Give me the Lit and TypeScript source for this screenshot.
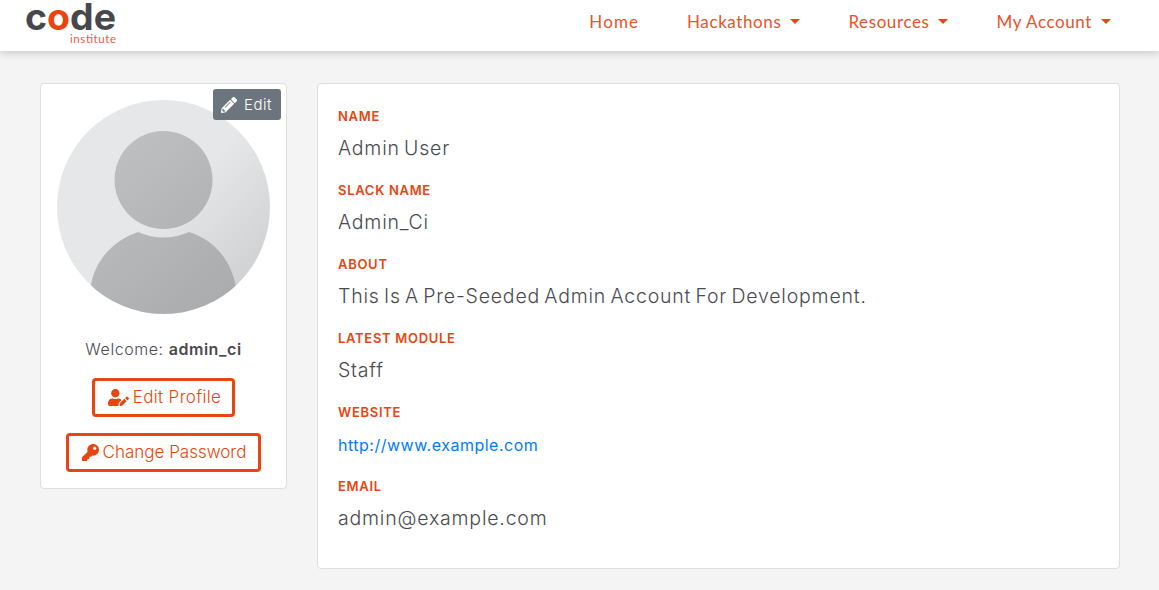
import { css, html, LitElement, svg } from 'lit';
import { customElement } from 'lit/decorators.js';

const PENCIL =
  'M497.9 142.1l-46.1 46.1c-4.7 4.7-12.3 4.7-17 0l-111-111c-4.7-4.7-4.7-12.3 0-17l46.1-46.1c18.7-18.7 49.1-18.7 67.9 0l60.1 60.1c18.8 18.7 18.8 49.1 0 67.9zM284.2 99.8L21.6 362.4.4 483.9c-2.9 16.4 11.4 30.6 27.8 27.8l121.5-21.3 262.6-262.6c4.7-4.7 4.7-12.3 0-17l-111-111c-4.8-4.7-12.4-4.7-17.1 0zM124.1 339.9c-5.5-5.5-5.5-14.3 0-19.8l154-154c5.5-5.5 14.3-5.5 19.8 0s5.5 14.3 0 19.8l-154 154c-5.5 5.5-14.3 5.5-19.8 0zM88 424h48v36.3l-64.5 11.3-31.1-31.1L51.7 376H88v48z';
const USER_EDIT =
  'M224 256c70.7 0 128-57.3 128-128S294.7 0 224 0 96 57.3 96 128s57.3 128 128 128zm89.6 32h-16.7c-22.2 10.2-46.9 16-72.9 16s-50.6-5.8-72.9-16h-16.7C60.2 288 0 348.2 0 422.4V464c0 26.5 21.5 48 48 48h274.9c-2.4-6.8-3.4-14-2.6-21.3l6.8-60.9 1.2-11.1 7.9-7.9 77.3-77.3c-24.5-27.7-60-45.5-99.9-45.5zm45.3 145.3l-6.8 61c-1.1 10.2 7.5 18.8 17.6 17.6l60.9-6.8 137.9-137.9-71.7-71.7-137.9 137.8zM633 268.9L595.1 231c-9.3-9.3-24.5-9.3-33.8 0l-37.8 37.8-4.1 4.1 71.8 71.7 41.8-41.8c9.3-9.4 9.3-24.5 0-33.9z';
const KEY =
  'M512 176.001C512 273.203 433.202 352 336 352c-11.22 0-22.19-1.062-32.827-3.069l-24.012 27.014A23.999 23.999 0 0 1 261.223 384H224v40c0 13.255-10.745 24-24 24h-40v40c0 13.255-10.745 24-24 24H24c-13.255 0-24-10.745-24-24v-78.059c0-6.365 2.529-12.47 7.029-16.971l161.802-161.802C163.108 213.814 160 195.271 160 176 160 78.798 238.797.001 335.999 0 433.488-.001 512 78.511 512 176.001zM336 128c0 26.51 21.49 48 48 48s48-21.49 48-48-21.49-48-48-48-48 21.49-48 48z';

const icon = (d: string, w: number, h: number, box: string) => html`<svg
  width=${w}
  height=${h}
  viewBox=${box}
  fill="currentColor"
>
  ${svg`<path d=${d}></path>`}
</svg>`;

const FIELDS = [
  { label: 'Name', value: 'Admin User' },
  { label: 'Slack Name', value: 'Admin_Ci' },
  { label: 'About', value: 'This Is A Pre-Seeded Admin Account For Development.' },
  { label: 'Latest Module', value: 'Staff' },
  { label: 'Website', value: 'http://www.example.com', link: true },
  { label: 'Email', value: 'admin@example.com' },
];

@customElement('app-root')
export class AppRoot extends LitElement {
  static override styles = css`
    :host {
      display: block;
      min-height: 590px;
      background: #f4f4f4;
      color: #4a4a4f;
      font-family: 'Inter', 'Open Sans', sans-serif;
      overflow: hidden;
    }

    .navbar {
      display: flex;
      align-items: flex-start;
      justify-content: space-between;
      height: 51px;
      padding: 0 48px 0 25px;
      background: #fff;
      box-shadow: 0 2px 8px rgba(0, 0, 0, 0.18);
      box-sizing: border-box;
    }

    .logo {
      display: block;
    }

    .logo__word {
      font-family: 'Inter', sans-serif;
      font-size: 37px;
      font-weight: 700;
      fill: #48484c;
    }

    .logo__o {
      fill: #e84610;
    }

    .logo__sub {
      font-family: 'Lato', sans-serif;
      font-size: 11.5px;
      fill: #e8603a;
    }

    .nav {
      display: flex;
      gap: 48px;
      padding-top: 11px;
    }

    .nav__item {
      display: flex;
      align-items: center;
      height: 21px;
      font-family: 'Lato', sans-serif;
      font-size: 17px;
      letter-spacing: 0.6px;
      color: #e8532a;
    }

    .nav__item--home {
      letter-spacing: 1.1px;
    }

    .caret {
      width: 0;
      height: 0;
      margin: -1px 0 0 9px;
      border-top: 5px solid #e84610;
      border-left: 5px solid transparent;
      border-right: 5px solid transparent;
    }

    .main {
      display: grid;
      grid-template-columns: 247px 803px;
      gap: 30px;
      align-items: start;
      padding: 32px 0 0 40px;
    }

    .card {
      position: relative;
      box-sizing: border-box;
      background: #fff;
      border: 1px solid #dfdfdf;
      border-radius: 4px;
    }

    .profile {
      display: flex;
      flex-direction: column;
      align-items: center;
      height: 406px;
      padding-top: 16px;
    }

    .avatar {
      display: block;
    }

    .edit {
      position: absolute;
      top: 5px;
      right: 5px;
      display: flex;
      align-items: center;
      gap: 7px;
      box-sizing: border-box;
      width: 68px;
      height: 31px;
      padding-left: 8px;
      background: #6c757d;
      border-radius: 3px;
      color: #fff;
      font-size: 15px;
      font-weight: 300;
      letter-spacing: 0.5px;
    }

    .welcome {
      margin-top: 25px;
      height: 20px;
      font-size: 16px;
      font-weight: 300;
      line-height: 20px;
      letter-spacing: 0.55px;
    }

    .welcome b {
      font-weight: 600;
    }

    .btn {
      display: flex;
      align-items: center;
      justify-content: center;
      gap: 4px;
      box-sizing: border-box;
      height: 39px;
      padding-bottom: 2px;
      border: 3px solid #e84610;
      border-radius: 4px;
      color: #e84610;
      font-size: 17px;
      font-weight: 300;
    }

    .btn svg {
      margin-top: 1px;
    }

    .btn--profile {
      width: 143px;
      margin-top: 19px;
      padding-left: 2px;
      letter-spacing: 0.35px;
    }

    .btn--password {
      width: 195px;
      margin-top: 16px;
      padding-left: 1px;
    }

    .details {
      height: 486px;
      padding: 22px 20px 0;
    }

    .field {
      height: 74px;
    }

    .field__label {
      height: 20px;
      font-size: 13px;
      font-weight: 600;
      line-height: 20px;
      letter-spacing: 0.7px;
      text-transform: uppercase;
      color: #e84610;
    }

    .field__value {
      margin-top: 9px;
      height: 27px;
      font-size: 19.5px;
      font-weight: 300;
      line-height: 27px;
      letter-spacing: 0.8px;
      word-spacing: -2px;
    }

    a {
      color: #007bff;
      font-size: 16px;
      font-weight: 400;
      letter-spacing: 0.5px;
      word-spacing: 0;
      text-decoration: none;
    }
  `;

  private renderLogo() {
    return html`<svg class="logo" width="91" height="46" viewBox="0 0 91 46">
      ${svg`
        <text class="logo__word" x="0" y="30" textLength="91" lengthAdjust="spacingAndGlyphs">c<tspan class="logo__o">o</tspan>de</text>
        <text class="logo__sub" x="45" y="43" textLength="46">institute</text>
      `}
    </svg>`;
  }

  private renderAvatar() {
    return html`<svg class="avatar" width="213" height="214" viewBox="0 0 213 214">
      ${svg`
        <defs>
          <linearGradient id="bg" x1="0" y1="0" x2="1" y2="1">
            <stop offset="0.5" stop-color="#e6e7e8"></stop>
            <stop offset="1" stop-color="#c8c9cb"></stop>
          </linearGradient>
          <linearGradient id="fg" gradientUnits="userSpaceOnUse" x1="40" y1="40" x2="190" y2="214">
            <stop offset="0" stop-color="#c0c1c3"></stop>
            <stop offset="1" stop-color="#a8a9ab"></stop>
          </linearGradient>
          <clipPath id="disc"><ellipse cx="106.5" cy="107" rx="106.5" ry="107"></ellipse></clipPath>
        </defs>
        <ellipse cx="106.5" cy="107" rx="106.5" ry="107" fill="url(#bg)"></ellipse>
        <circle cx="106.5" cy="80" r="49" fill="url(#fg)"></circle>
        <path clip-path="url(#disc)" fill="url(#fg)"
          d="M81 132 Q106.5 143 132 132 C157 140 175 160 179.5 190 L179.5 214 L34 214 L34 185 C38 160 57 140 81 132Z"></path>
      `}
    </svg>`;
  }

  override render() {
    return html`
      <nav class="navbar">
        ${this.renderLogo()}
        <div class="nav">
          <div class="nav__item nav__item--home">Home</div>
          <div class="nav__item">Hackathons<span class="caret"></span></div>
          <div class="nav__item">Resources<span class="caret"></span></div>
          <div class="nav__item">My Account<span class="caret"></span></div>
        </div>
      </nav>
      <div class="main">
        <div class="card profile">
          ${this.renderAvatar()}
          <div class="edit">${icon(PENCIL, 16, 16, '0 0 512 512')}Edit</div>
          <div class="welcome">Welcome: <b>admin_ci</b></div>
          <div class="btn btn--profile">
            ${icon(USER_EDIT, 21, 17, '0 0 640 512')}Edit Profile
          </div>
          <div class="btn btn--password">
            ${icon(KEY, 17, 17, '0 0 512 512')}Change Password
          </div>
        </div>
        <div class="card details">
          ${FIELDS.map(
            (f) => html`<div class="field">
              <div class="field__label">${f.label}</div>
              <div class="field__value">
                ${f.link ? html`<a href="#">${f.value}</a>` : f.value}
              </div>
            </div>`
          )}
        </div>
      </div>
    `;
  }
}
